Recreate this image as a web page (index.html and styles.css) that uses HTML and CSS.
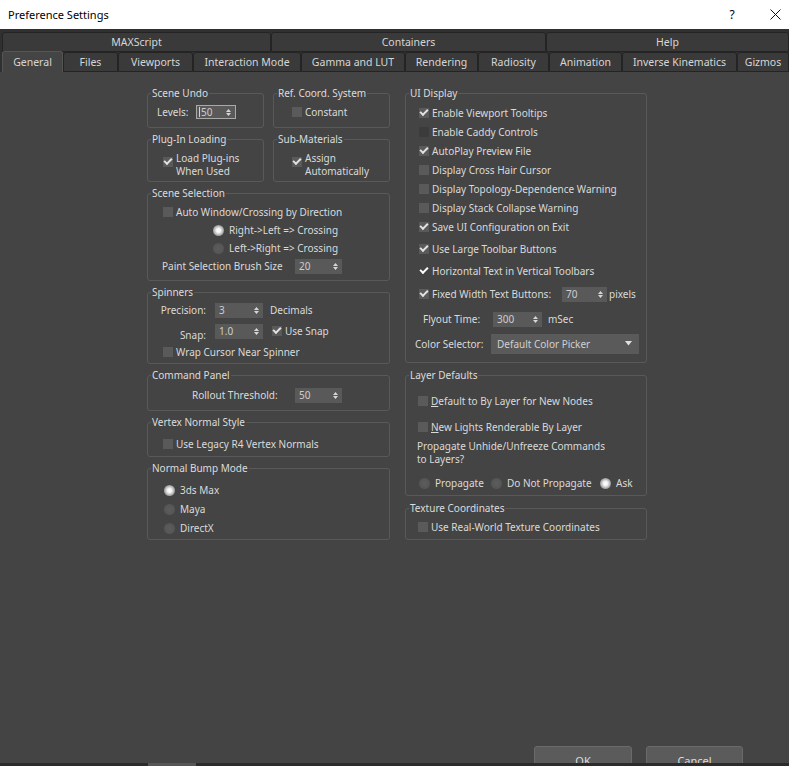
FILE: index.html
```html
<!DOCTYPE html>
<html>
<head>
<meta charset="utf-8">
<title>Preference Settings</title>
<link rel="stylesheet" href="styles.css">
</head>
<body>
<div class="window">
  <header class="titlebar">
    <span class="title">Preference Settings</span>
    <span class="help">?</span>
    <span class="close"><svg width="11" height="11" viewBox="0 0 11 11"><path d="M0.5 0.5 L10.5 10.5 M10.5 0.5 L0.5 10.5" stroke="#111" stroke-width="1" fill="none"/></svg></span>
  </header>

  <nav class="tabs">
    <div class="tabrow">
      <div class="tab t-maxscript">MAXScript</div>
      <div class="tab t-containers">Containers</div>
      <div class="tab t-help">Help</div>
    </div>
    <div class="tabrow">
      <div class="tab t-general selected">General</div>
      <div class="tab t-files">Files</div>
      <div class="tab t-viewports">Viewports</div>
      <div class="tab t-interaction">Interaction Mode</div>
      <div class="tab t-gamma">Gamma and LUT</div>
      <div class="tab t-rendering">Rendering</div>
      <div class="tab t-radiosity">Radiosity</div>
      <div class="tab t-animation">Animation</div>
      <div class="tab t-ik">Inverse Kinematics</div>
      <div class="tab t-gizmos">Gizmos</div>
    </div>
  </nav>

  <main class="content">
    <div class="col col-left">
      <div class="pair">
        <section class="group g-undo">
          <span class="legend">Scene Undo</span>
          <div class="row mt3 pl9">
            <span class="lbl w-levels">Levels:</span>
            <span class="spin focus s-levels"><span class="val"><i class="caret"></i>50</span><svg width="5" height="9" viewBox="0 0 5 9"><path d="M0 4 L2.5 1 L5 4 Z M0 5 L2.5 8 L5 5 Z" fill="#d6d6d6"/></svg></span>
          </div>
        </section>
        <section class="group g-undo">
          <span class="legend">Ref. Coord. System</span>
          <div class="row mt3 pl18">
            <span class="cb"></span><span class="lbl">Constant</span>
          </div>
        </section>
      </div>

      <div class="pair">
        <section class="group g-plug">
          <span class="legend">Plug-In Loading</span>
          <div class="row two mt5 pl15">
            <span class="cb on cb-two"></span><span class="lbl">Load Plug-ins<br>When Used</span>
          </div>
        </section>
        <section class="group g-plug">
          <span class="legend">Sub-Materials</span>
          <div class="row two mt5 pl18">
            <span class="cb on cb-two"></span><span class="lbl">Assign<br>Automatically</span>
          </div>
        </section>
      </div>

      <section class="group g-scene">
        <span class="legend">Scene Selection</span>
        <div class="row mt3 pl15">
          <span class="cb"></span><span class="lbl">Auto Window/Crossing by Direction</span>
        </div>
        <div class="row mt2 pl65">
          <span class="rb on"></span><span class="lbl">Right-&gt;Left =&gt; Crossing</span>
        </div>
        <div class="row mt2 pl65">
          <span class="rb"></span><span class="lbl">Left-&gt;Right =&gt; Crossing</span>
        </div>
        <div class="row mt2 pl14">
          <span class="lbl w-brush">Paint Selection Brush Size</span>
          <span class="spin s-47"><span class="val">20</span><svg width="5" height="9" viewBox="0 0 5 9"><path d="M0 4 L2.5 1 L5 4 Z M0 5 L2.5 8 L5 5 Z" fill="#d6d6d6"/></svg></span>
        </div>
      </section>

      <section class="group g-spinners">
        <span class="legend">Spinners</span>
        <div class="row mt2">
          <span class="lbl w-spinlbl">Precision:</span>
          <span class="spin s-48"><span class="val">3</span><svg width="5" height="9" viewBox="0 0 5 9"><path d="M0 4 L2.5 1 L5 4 Z M0 5 L2.5 8 L5 5 Z" fill="#d6d6d6"/></svg></span>
          <span class="lbl after7">Decimals</span>
        </div>
        <div class="row mt5">
          <span class="lbl w-spinlbl lower">Snap:</span>
          <span class="spin s-48"><span class="val">1.0</span><svg width="5" height="9" viewBox="0 0 5 9"><path d="M0 4 L2.5 1 L5 4 Z M0 5 L2.5 8 L5 5 Z" fill="#d6d6d6"/></svg></span>
          <span class="cb on after9"></span><span class="lbl">Use Snap</span>
        </div>
        <div class="row mt5 pl15">
          <span class="cb"></span><span class="lbl">Wrap Cursor Near Spinner</span>
        </div>
      </section>

      <section class="group g-command">
        <span class="legend">Command Panel</span>
        <div class="row mt4 pl44">
          <span class="lbl w-rollout">Rollout Threshold:</span>
          <span class="spin s-47"><span class="val">50</span><svg width="5" height="9" viewBox="0 0 5 9"><path d="M0 4 L2.5 1 L5 4 Z M0 5 L2.5 8 L5 5 Z" fill="#d6d6d6"/></svg></span>
        </div>
      </section>

      <section class="group g-vertex">
        <span class="legend">Vertex Normal Style</span>
        <div class="row mt6 pl15">
          <span class="cb"></span><span class="lbl">Use Legacy R4 Vertex Normals</span>
        </div>
      </section>

      <section class="group g-bump">
        <span class="legend">Normal Bump Mode</span>
        <div class="row mt6 pl16">
          <span class="rb on"></span><span class="lbl">3ds Max</span>
        </div>
        <div class="row mt3 pl16">
          <span class="rb"></span><span class="lbl">Maya</span>
        </div>
        <div class="row mt3 pl16">
          <span class="rb"></span><span class="lbl">DirectX</span>
        </div>
      </section>
    </div>

    <div class="col col-right">
      <section class="group g-ui">
        <span class="legend">UI Display</span>
        <div class="row mt4 pl13"><span class="cb on"></span><span class="lbl">Enable Viewport Tooltips</span></div>
        <div class="row mt3 pl13"><span class="cb dark"></span><span class="lbl">Enable Caddy Controls</span></div>
        <div class="row mt3 pl13"><span class="cb on"></span><span class="lbl">AutoPlay Preview File</span></div>
        <div class="row mt3 pl13"><span class="cb"></span><span class="lbl">Display Cross Hair Cursor</span></div>
        <div class="row mt3 pl13"><span class="cb"></span><span class="lbl">Display Topology-Dependence Warning</span></div>
        <div class="row mt3 pl13"><span class="cb"></span><span class="lbl">Display Stack Collapse Warning</span></div>
        <div class="row mt3 pl13"><span class="cb on"></span><span class="lbl">Save UI Configuration on Exit</span></div>
        <div class="row mt6 pl13"><span class="cb on"></span><span class="lbl">Use Large Toolbar Buttons</span></div>
        <div class="row mt6 pl13"><span class="cb on bare"></span><span class="lbl">Horizontal Text in Vertical Toolbars</span></div>
        <div class="row mt7 pl13">
          <span class="cb on"></span><span class="lbl w-fixed">Fixed Width Text Buttons:</span>
          <span class="spin s-45"><span class="val">70</span><svg width="5" height="9" viewBox="0 0 5 9"><path d="M0 4 L2.5 1 L5 4 Z M0 5 L2.5 8 L5 5 Z" fill="#d6d6d6"/></svg></span>
          <span class="lbl after2">pixels</span>
        </div>
        <div class="row mt9 pl17">
          <span class="lbl w-flyout">Flyout Time:</span>
          <span class="spin s-49"><span class="val">300</span><svg width="5" height="9" viewBox="0 0 5 9"><path d="M0 4 L2.5 1 L5 4 Z M0 5 L2.5 8 L5 5 Z" fill="#d6d6d6"/></svg></span>
          <span class="lbl after6">mSec</span>
        </div>
        <div class="row tall mt7 pl9">
          <span class="lbl w-color">Color Selector:</span>
          <span class="select"><span>Default Color Picker</span><svg width="7" height="5" viewBox="0 0 7 5"><path d="M0 0 L7 0 L3.5 4.5 Z" fill="#e0e0e0"/></svg></span>
        </div>
      </section>

      <section class="group g-layer">
        <span class="legend">Layer Defaults</span>
        <div class="row mt10 pl12"><span class="cb"></span><span class="lbl"><u>D</u>efault to By Layer for New Nodes</span></div>
        <div class="row mt10 pl12"><span class="cb"></span><span class="lbl"><u>N</u>ew Lights Renderable By Layer</span></div>
        <p class="note">Propagate Unhide/Unfreeze Commands<br>to Layers?</p>
        <div class="row mt9 pl13">
          <span class="opt w-opt1"><span class="rb"></span><span class="lbl">Propagate</span></span>
          <span class="opt w-opt2"><span class="rb"></span><span class="lbl">Do Not Propagate</span></span>
          <span class="opt"><span class="rb on"></span><span class="lbl">Ask</span></span>
        </div>
      </section>

      <section class="group g-texture">
        <span class="legend">Texture Coordinates</span>
        <div class="row mt3 pl12"><span class="cb"></span><span class="lbl">Use Real-World Texture Coordinates</span></div>
      </section>
    </div>
  </main>

  <footer class="footer">
    <button class="btn b-ok">OK</button>
    <button class="btn b-cancel">Cancel</button>
  </footer>
  <div class="taskbar"><span class="thumb"></span></div>
</div>
</body>
</html>
```

FILE: styles.css
```css
* { box-sizing: border-box; }

body {
  margin: 0;
  width: 789px;
  height: 766px;
  overflow: hidden;
  background: #444444;
  font-family: "Noto Sans", "Open Sans", sans-serif;
  font-size: 10px;
  color: #dadada;
}

.window {
  display: flex;
  flex-direction: column;
  height: 766px;
}

/* Title bar */
.titlebar {
  flex: none;
  height: 29px;
  background: #ffffff;
  color: #000;
  display: flex;
  align-items: center;
  padding-left: 8px;
  font-size: 11px;
}
.title { flex: 1; }
.help {
  width: 32px;
  text-align: center;
  margin-right: 13px;
  font-size: 12px;
}
.close {
  width: 28px;
  display: flex;
  justify-content: center;
}
.close svg { display: block; }

/* Tabs */
.tabs {
  flex: none;
  height: 43px;
  background: #303030;
  padding: 3px 0 0 2px;
  display: flex;
  flex-direction: column;
}
.tabrow {
  display: flex;
  height: 20px;
}
.tab {
  flex: none;
  height: 20px;
  display: flex;
  align-items: center;
  justify-content: center;
  background: #3a3a3a;
  border: 1px solid #242424;
  border-radius: 3px 3px 0 0;
  color: #d6d6d6;
  font-size: 10.5px;
  white-space: nowrap;
  overflow: hidden;
}
.tab.selected {
  background: #444444;
  border-color: #555555;
  border-bottom: none;
  height: 21px;
  margin-top: -1px;
}
.t-maxscript { width: 269px; }
.t-containers { width: 275px; }
.t-help { width: 243px; }
.t-general { width: 61px; }
.t-files { width: 55px; }
.t-viewports { width: 75px; }
.t-interaction { width: 108px; }
.t-gamma { width: 104px; }
.t-rendering { width: 73px; }
.t-radiosity { width: 71px; }
.t-animation { width: 73px; }
.t-ik { width: 115px; }
.t-gizmos { width: 52px; }

/* Content */
.content {
  flex: 1;
  display: flex;
  gap: 15px;
  padding: 21px 0 0 147px;
}
.col {
  display: flex;
  flex-direction: column;
}
.col-left { width: 243px; gap: 11px; }
.col-right { width: 242px; gap: 12px; }
.pair { display: flex; gap: 9px; }
.pair .group { width: 117px; }

.group {
  flex: none;
  border: 1px solid #595959;
  border-radius: 3px;
}
.g-undo { height: 35px; }
.g-plug { height: 43px; }
.g-scene { height: 88px; }
.g-spinners { height: 72px; }
.g-command { height: 36px; }
.g-vertex { height: 35px; }
.g-bump { height: 72px; }
.g-ui { height: 270px; }
.g-layer { height: 121px; }
.g-texture { height: 32px; }

.legend {
  display: block;
  width: max-content;
  height: 15px;
  line-height: 15px;
  margin: -8px 0 0 3px;
  padding: 0 1px;
  background: #444444;
  color: #dcdcdc;
}

.row {
  display: flex;
  align-items: center;
  height: 16px;
  white-space: nowrap;
}
.row.two {
  align-items: flex-start;
  height: auto;
  line-height: 13px;
}
.row.tall { height: 20px; }

.mt2 { margin-top: 2px; }
.mt3 { margin-top: 3px; }
.mt4 { margin-top: 4px; }
.mt5 { margin-top: 5px; }
.mt6 { margin-top: 6px; }
.mt7 { margin-top: 7px; }
.mt9 { margin-top: 9px; }
.mt10 { margin-top: 10px; }
.pl9 { padding-left: 9px; }
.pl12 { padding-left: 12px; }
.pl13 { padding-left: 13px; }
.pl14 { padding-left: 14px; }
.pl15 { padding-left: 15px; }
.pl16 { padding-left: 16px; }
.pl17 { padding-left: 17px; }
.pl18 { padding-left: 18px; }
.pl44 { padding-left: 44px; }
.pl65 { padding-left: 65px; }

.lbl { flex: none; }
.w-levels { width: 39px; }
.w-brush { width: 133px; }
.w-spinlbl { width: 58px; margin-right: 9px; text-align: right; }
.w-rollout { width: 103px; }
.w-fixed { width: 130px; }
.w-flyout { width: 70px; }
.w-color { width: 76px; }
.after2 { margin-left: 2px; }
.after6 { margin-left: 6px; }
.after7 { margin-left: 7px; }
.after9 { margin-left: 9px; }
.lower { padding-top: 8px; }

/* Checkbox */
.cb {
  position: relative;
  flex: none;
  width: 10px;
  height: 10px;
  background: #5a5a5a;
  margin-right: 3px;
}
.cb.dark { background: #3b3b3b; }
.cb.on::after {
  content: "";
  box-sizing: content-box;
  position: absolute;
  left: 1px;
  top: 1px;
  width: 6px;
  height: 3px;
  border-left: 2px solid #e2e2e2;
  border-bottom: 2px solid #e2e2e2;
  transform: rotate(-45deg);
}
.cb.bare { background: transparent; }
.cb.bare::after { border-color: #ffffff; }
.cb-two { margin-top: 5px; }

/* Radio */
.rb {
  flex: none;
  width: 11px;
  height: 11px;
  border-radius: 50%;
  background: radial-gradient(circle at 50% 50%, #5c5c5c 0, #565656 60%, #4e4e4e 100%);
  margin-right: 5px;
}
.rb.on {
  background: radial-gradient(circle at 50% 50%, #ffffff 0, #f2f2f2 28%, #a8a8a8 62%, #707070 100%);
}

/* Spinner */
.spin {
  flex: none;
  display: flex;
  align-items: center;
  justify-content: space-between;
  height: 15px;
  background: #595959;
  padding: 0 4px 0 4px;
  color: #cdcdcd;
}
.spin svg { display: block; }
.spin.focus {
  height: 14px;
  border: 1px solid #a9a9a9;
  padding-left: 2px;
}
.val { display: flex; align-items: center; }
.caret {
  display: block;
  width: 1px;
  height: 10px;
  background: #d0d0d0;
  margin-right: 1px;
}
.s-levels { width: 40px; }
.s-45 { width: 45px; }
.s-47 { width: 47px; }
.s-48 { width: 48px; }
.s-49 { width: 49px; }

/* Dropdown */
.select {
  flex: none;
  width: 148px;
  height: 20px;
  background: #5a5a5a;
  display: flex;
  align-items: center;
  justify-content: space-between;
  padding: 0 7px 0 6px;
  color: #d0d0d0;
}
.select svg { display: block; margin-top: -2px; }

/* Layer defaults */
.note {
  margin: 5px 0 0 11px;
  line-height: 13px;
}
.opt { display: flex; align-items: center; flex: none; }
.w-opt1 { width: 72px; }
.w-opt2 { width: 109px; }

/* Footer */
.footer {
  flex: none;
  height: 17px;
  display: flex;
  gap: 14px;
  padding-left: 534px;
  overflow: hidden;
}
.btn {
  flex: none;
  height: 28px;
  background: #5b5b5b;
  border: 1px solid #6a6a6a;
  border-radius: 3px;
  color: #dedede;
  font-family: inherit;
  font-size: 11px;
  display: flex;
  align-items: center;
  justify-content: center;
  padding: 0;
}
.b-ok { width: 98px; }
.b-cancel { width: 97px; }

.taskbar {
  flex: none;
  height: 3px;
  background: #2b2b2b;
  padding-left: 148px;
}
.thumb {
  display: block;
  width: 48px;
  height: 3px;
  background: #565656;
}
```
